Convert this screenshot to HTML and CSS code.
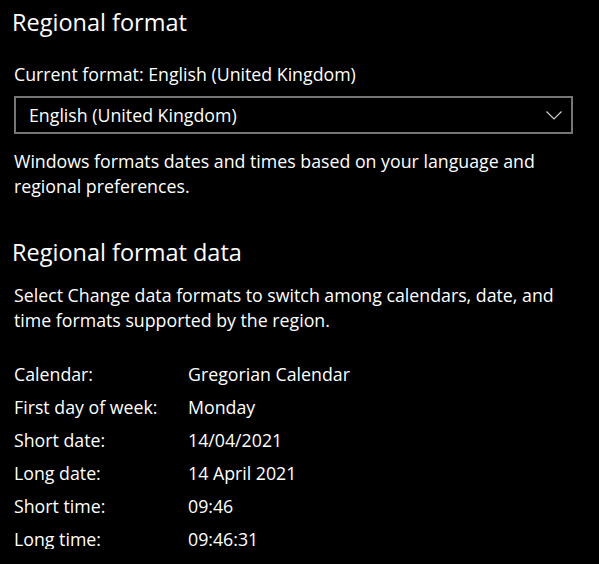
FILE: index.html
```html
<!DOCTYPE html>
<html lang="en">
<head>
    <meta charset="UTF-8">
    <meta name="viewport" content="width=device-width, initial-scale=1.0">
    <title>Region</title>
    <link rel="stylesheet" href="styles.css">
</head>
<body>
    <div class="page">
        <h2 class="section-title">Regional format</h2>
        <div class="current-format">Current format: English (United Kingdom)</div>
        <div class="select-box">
            <span class="select-value">English (United Kingdom)</span>
            <svg class="chevron" width="16" height="9" viewBox="0 0 16 9">
                <polyline points="0.5,0.5 8,8 15.5,0.5" fill="none" stroke="#cfcfcf" stroke-width="1.2"/>
            </svg>
        </div>
        <p class="description">Windows formats dates and times based on your language and regional preferences.</p>

        <h2 class="section-title data-title">Regional format data</h2>
        <p class="description">Select Change data formats to switch among calendars, date, and time formats supported by the region.</p>

        <div class="data-table">
            <div class="data-label">Calendar:</div>
            <div class="data-value">Gregorian Calendar</div>
            <div class="data-label">First day of week:</div>
            <div class="data-value">Monday</div>
            <div class="data-label">Short date:</div>
            <div class="data-value">14/04/2021</div>
            <div class="data-label">Long date:</div>
            <div class="data-value">14 April 2021</div>
            <div class="data-label">Short time:</div>
            <div class="data-value">09:46</div>
            <div class="data-label">Long time:</div>
            <div class="data-value">09:46:31</div>
        </div>
    </div>
</body>
</html>
```

FILE: styles.css
```css
html, body {
    background: #000;
}

body {
    margin: 0;
    font-family: "Open Sans", "Noto Sans", sans-serif;
    color: #fff;
    font-size: 17.75px;
}

.page {
    padding: 6px 0 0 14px;
    width: 565px;
}

.section-title {
    margin: 0 0 0 -2px;
    font-size: 23.5px;
    font-weight: 400;
    line-height: 32px;
}

.current-format {
    margin-top: 24px;
    line-height: 24px;
}

.select-box {
    margin-top: 10px;
    width: 559px;
    height: 38px;
    box-sizing: border-box;
    border: 2px solid #767676;
    display: flex;
    align-items: center;
    justify-content: space-between;
    padding: 0 9px 0 13px;
}

.select-value {
    line-height: 24px;
}

.description {
    margin: 15px 0 0 0;
    line-height: 25px;
}

.data-title {
    margin-top: 37px;
}

.data-table {
    margin-top: 31px;
    display: grid;
    grid-template-columns: 174px auto;
    row-gap: 13px;
    line-height: 20px;
}
```
